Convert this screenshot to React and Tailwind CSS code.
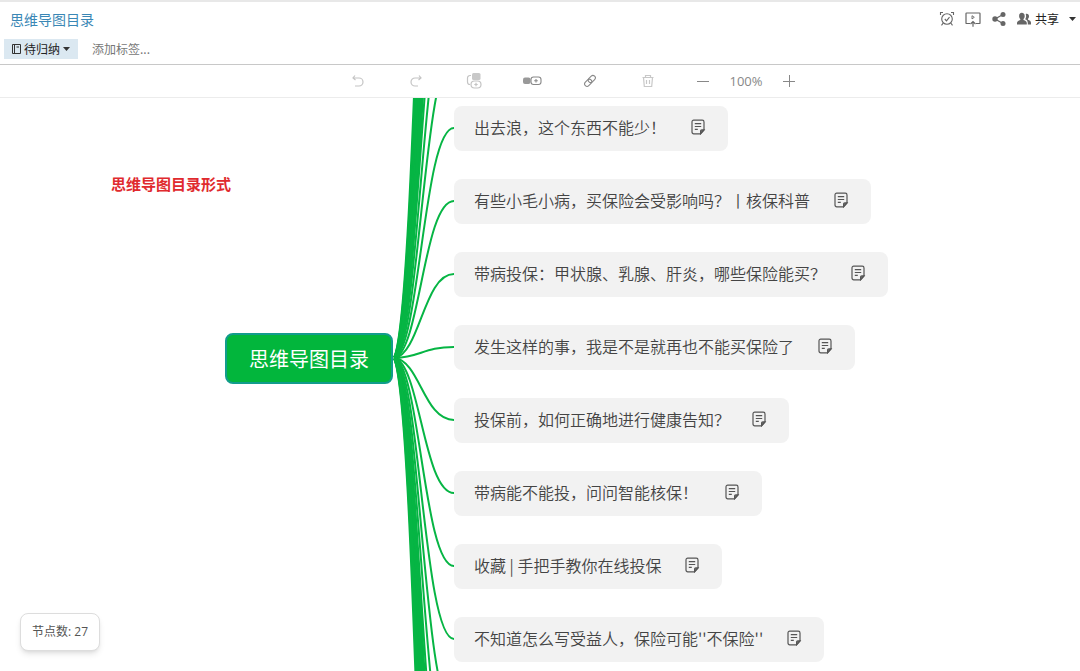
import React from 'react';

const ROOT = { x: 395, y: 260 };
const BRANCH_X = 454;
const PITCH = 73;
const FIRST_Y = 30;

const topics = [
  { text: '出去浪，这个东西不能少！', width: 274 },
  { text: '有些小毛小病，买保险会受影响吗？丨核保科普', width: 417 },
  { text: '带病投保：甲状腺、乳腺、肝炎，哪些保险能买？', width: 434 },
  { text: '发生这样的事，我是不是就再也不能买保险了', width: 401 },
  { text: '投保前，如何正确地进行健康告知？', width: 335 },
  { text: '带病能不能投，问问智能核保！', width: 308 },
  { text: '收藏 | 手把手教你在线投保', width: 268 },
  { text: "不知道怎么写受益人，保险可能''不保险''", width: 370 },
];

function branchPath(index) {
  const y = FIRST_Y + index * PITCH;
  const dy = y - ROOT.y;
  return `M${ROOT.x} ${ROOT.y} C${ROOT.x + 25} ${ROOT.y + dy * 0.06} ${ROOT.x + 29} ${y} ${BRANCH_X} ${y}`;
}

const branches = Array.from({ length: 26 }, (_, i) => i - 9);

function NoteIcon() {
  return (
    <svg width="16" height="16" viewBox="0 0 16 16" fill="none" stroke="#555" strokeWidth="1.2" aria-hidden="true">
      <path d="M3.700 1.200h8.600a1.700 1.700 0 0 1 1.700 1.700v8L10.500 14.800H3.700A1.700 1.700 0 0 1 2 13.100V2.900a1.700 1.700 0 0 1 1.700-1.700z" />
      <path d="M4.800 4.700h6.400M4.800 7.500h6.400M4.800 10.300h3" />
      <path d="M14 10.900h-2.200a1.200 1.200 0 0 0-1.200 1.200v2.600z" fill="#777" />
    </svg>
  );
}

function AlarmIcon() {
  return (
    <svg width="16" height="16" viewBox="0 0 16 16" fill="none" stroke="#666" strokeWidth="1.1" aria-hidden="true">
      <circle cx="8" cy="8" r="5.300" />
      <path d="M5.800 8l1.700 1.800 3-3.600M1.500 4V1.500H4M12 1.500h2.500V4M4.200 12l-1.700 2.300M11.800 12l1.700 2.300" />
    </svg>
  );
}

function PresentIcon() {
  return (
    <svg width="16" height="16" viewBox="0 0 16 16" fill="none" stroke="#666" strokeWidth="1.2" aria-hidden="true">
      <path d="M5 12.500H1.600a.6.6 0 0 1-.6-.6V2.600a.6.6 0 0 1 .6-.6h12.800a.6.6 0 0 1 .6.6v9.300a.6.6 0 0 1-.6.600H11" />
      <path d="M8 15.800v-4.800M5.500 13L8 10.500l2.500 2.500" />
      <path d="M7 4.700v3.200L9.300 6.300z" strokeWidth=".9" />
    </svg>
  );
}

function ShareIcon() {
  return (
    <svg width="16" height="16" viewBox="0 0 16 16" fill="#666" aria-hidden="true">
      <path d="M12 3.500L4 8l8 4.500" fill="none" stroke="#666" strokeWidth="1.3" />
      <circle cx="12" cy="3.500" r="2.500" />
      <circle cx="4" cy="8" r="2.700" />
      <circle cx="12" cy="12.500" r="2.500" />
    </svg>
  );
}

function PeopleIcon() {
  return (
    <svg width="14" height="14" viewBox="0 0 14 14" fill="#666" aria-hidden="true">
      <path d="M4.800.8c1.800 0 2.900 1.300 2.900 3.100 0 1.300-.5 2.400-1.200 3v1c1.900.7 3.300 1.300 3.300 3.100v1.500H0V11c0-1.800 1.400-2.400 3.300-3.100v-1c-.7-.6-1.200-1.700-1.200-3C2.100 2.100 3 .8 4.800.8z" />
      <path d="M9.700 1.800c1.500 0 2.300 1 2.300 2.500 0 1-.4 2-1 2.500v1c1.600.6 3 1.300 3 3v1.700h-3.200V11c0-2-1-3-2.700-3.700.7-.8 1-2 1-3.200 0-.8-.1-1.700-.4-2.200.300-.1.600-.1 1-.1z" />
    </svg>
  );
}

function UndoIcon() {
  return (
    <svg width="14" height="14" viewBox="0 0 14 14" fill="none" stroke="#c4c4c4" strokeWidth="1.2" aria-hidden="true">
      <path d="M4 1.500L2 4l2.500 2M2 4h6a4 4 0 0 1 0 8H4" />
    </svg>
  );
}

function RedoIcon() {
  return (
    <svg width="14" height="14" viewBox="0 0 14 14" fill="none" stroke="#c4c4c4" strokeWidth="1.2" aria-hidden="true">
      <path d="M10 1.500L12 4 9.500 6M12 4H6a4 4 0 0 0 0 8h3" />
    </svg>
  );
}

function ChildTopicIcon() {
  return (
    <svg width="16" height="16" viewBox="0 0 16 16" fill="none" stroke="#c4c4c4" strokeWidth="1.2" aria-hidden="true">
      <rect x="6" y="0" width="8.500" height="7" rx="1.500" fill="#c8c8c8" stroke="none" />
      <path d="M5 2.500H4A2.500 2.500 0 0 0 1.500 5v4A2.500 2.500 0 0 0 4 11.500" />
      <rect x="5" y="8" width="10" height="7" rx="3.500" fill="#fff" />
      <path d="M10 9.800v3.400M8.300 11.500h3.400" />
    </svg>
  );
}

function SiblingTopicIcon() {
  return (
    <svg width="20" height="12" viewBox="0 0 20 12" fill="none" stroke="#888" strokeWidth="1.1" aria-hidden="true">
      <rect x="1" y="2.500" width="7.500" height="6.500" rx="2" fill="#999" stroke="none" />
      <rect x="9" y="2" width="10" height="7.500" rx="2.500" />
      <path d="M14 4v3.600M12.200 5.800h3.600" />
    </svg>
  );
}

function LinkIcon() {
  return (
    <svg width="14" height="14" viewBox="0 0 14 14" fill="none" stroke="#888" strokeWidth="1.1" aria-hidden="true">
      <rect x="-4" y="-2.400" width="8" height="4.800" rx="2.400" transform="translate(8.800 5) rotate(-45)" />
      <rect x="-4" y="-2.400" width="8" height="4.800" rx="2.400" transform="translate(5.200 8.800) rotate(-45)" />
    </svg>
  );
}

function TrashIcon() {
  return (
    <svg width="14" height="14" viewBox="0 0 14 14" fill="none" stroke="#c8c8c8" strokeWidth="1.2" aria-hidden="true">
      <path d="M1.500 3.500h11M4.500 3.500v-2h5v2M2.500 3.500l.8 9h7.400l.8-9M5.500 6v4M8.500 6v4" />
    </svg>
  );
}

function Caret() {
  return (
    <svg width="7" height="4" viewBox="0 0 7 4" fill="#333" aria-hidden="true">
      <path d="M0 0h7L3.500 4z" />
    </svg>
  );
}

const tools = [
  { label: '撤销', Icon: UndoIcon },
  { label: '重做', Icon: RedoIcon },
  { label: '插入子主题', Icon: ChildTopicIcon },
  { label: '插入主题', Icon: SiblingTopicIcon },
  { label: '链接', Icon: LinkIcon },
  { label: '删除', Icon: TrashIcon },
];

export default function App() {
  return (
    <div className="flex min-h-screen flex-col bg-white font-['Noto_Sans_CJK_SC',sans-serif] text-[#333]">
      <header className="border-t-2 border-b border-t-[#e8e8e8] border-b-[#c8c8c8]">
        <div className="flex h-[34px] items-center justify-between pr-1 pl-[10px]">
          <h1 className="text-[14px] leading-5 text-[#3a87b5]">思维导图目录</h1>
          <div className="flex items-center gap-[10px]">
            <button type="button" aria-label="提醒"><AlarmIcon /></button>
            <button type="button" aria-label="演示"><PresentIcon /></button>
            <button type="button" aria-label="分享"><ShareIcon /></button>
            <button type="button" className="flex items-center gap-1 text-[12px] leading-5 text-[#222]">
              <PeopleIcon />
              <span className="mr-[6px]">共享</span>
              <Caret />
            </button>
          </div>
        </div>
        <div className="flex h-7 items-start gap-[14px] pt-[3px] pl-1">
          <button type="button" className="flex h-5 items-center gap-[3px] bg-[#dbe8f1] px-2 text-[12px] leading-5 text-[#222]">
            <svg width="9" height="10" viewBox="0 0 9 10" fill="none" stroke="#333" aria-hidden="true">
              <path d="M.5.5h8v9h-8zM2.500.5v9M4.500 3h2.500" />
            </svg>
            <span>待归纳</span>
            <Caret />
          </button>
          <input aria-label="添加标签" placeholder="添加标签..." className="h-5 w-40 text-[12px] leading-5 outline-none placeholder:text-[#777]" />
        </div>
      </header>

      <div role="toolbar" aria-label="编辑" className="flex h-[33px] items-center justify-center border-b border-[#ececec] pl-11">
        {tools.map(({ label, Icon }) => (
          <button key={label} type="button" aria-label={label} className="flex w-[58px] justify-center">
            <Icon />
          </button>
        ))}
        <div className="flex w-[119px] items-center justify-between pl-5 font-['Open_Sans',sans-serif] text-[13px] leading-5 text-[#888]">
          <button type="button" aria-label="缩小">
            <svg width="12" height="12" viewBox="0 0 12 12" stroke="#888" aria-hidden="true"><path d="M0 6.500h12" /></svg>
          </button>
          <span>100%</span>
          <button type="button" aria-label="放大">
            <svg width="12" height="12" viewBox="0 0 12 12" stroke="#888" aria-hidden="true"><path d="M0 6.500h12M6.500 0v12" /></svg>
          </button>
        </div>
      </div>

      <main className="relative min-h-[573px] flex-1 overflow-hidden">
        <svg className="absolute inset-0 h-full w-full" fill="none" stroke="#06b544" aria-hidden="true">
          {branches.map((i) => (
            <path key={i} d={branchPath(i)} strokeWidth={i < -3 || i > 10 ? 4 : 2} />
          ))}
        </svg>

        <p className="absolute top-[76px] left-[111px] text-[15px] leading-5 font-bold text-[#e02a2e]">思维导图目录形式</p>

        <div className="absolute top-[235px] left-[225px] flex h-[51px] w-[168px] items-center justify-center rounded-lg border-2 border-[#129c8c] bg-[#02b63c] text-[20px] leading-7 text-white">
          思维导图目录
        </div>

        <ul className="absolute top-2 left-[454px] flex flex-col gap-7 text-[16px] leading-6 font-[350] text-[#444]">
          {topics.map(({ text, width }) => (
            <li key={text} style={{ width }} className="flex h-[45px] items-center justify-between rounded-lg bg-[#f2f2f2] pr-[22px] pb-[3px] pl-5 whitespace-nowrap">
              <span>{text}</span>
              <NoteIcon />
            </li>
          ))}
        </ul>

        <div className="absolute bottom-5 left-5 flex h-[38px] w-20 items-center justify-center rounded-lg border border-[#ddd] bg-white font-['Open_Sans','Noto_Sans_CJK_SC',sans-serif] text-[12px] leading-5 text-[#555] shadow-md">
          节点数: 27
        </div>
      </main>
    </div>
  );
}
